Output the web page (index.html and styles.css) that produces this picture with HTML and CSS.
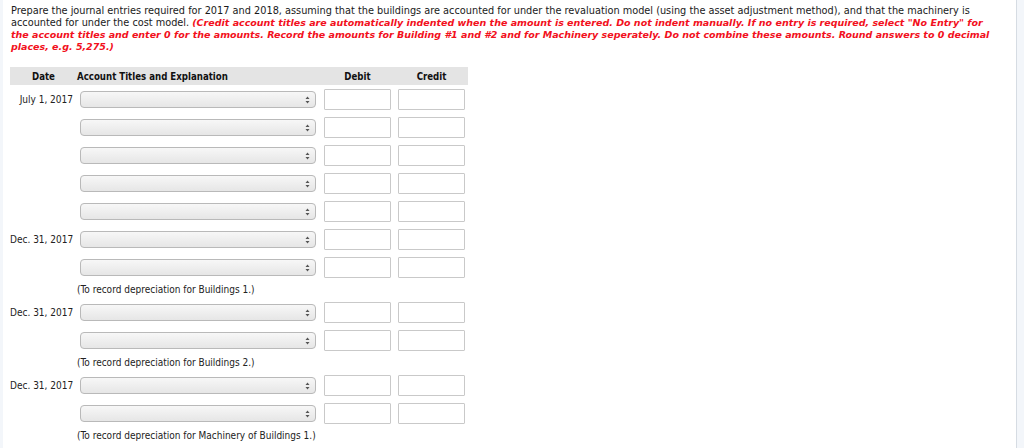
FILE: index.html
```html
<!DOCTYPE html>
<html>
<head>
<meta charset="utf-8">
<link rel="stylesheet" href="styles.css">
</head>
<body>
<div class="page">
  <p class="intro">Prepare the journal entries required for 2017 and 2018, assuming that the buildings are accounted for under the revaluation model (using the asset adjustment method), and that the machinery is accounted for under the cost model. <em class="warn">(Credit account titles are automatically indented when the amount is entered. Do not indent manually. If no entry is required, select "No Entry" for the account titles and enter 0 for the amounts. Record the amounts for Building #1 and #2 and for Machinery seperately. Do not combine these amounts. Round answers to 0 decimal places, e.g. 5,275.)</em></p>

  <table class="journal">
    <colgroup>
      <col class="c-date"><col class="c-acct"><col class="c-debit"><col class="c-credit">
    </colgroup>
    <thead>
      <tr><th>Date</th><th class="th-acct">Account Titles and Explanation</th><th>Debit</th><th>Credit</th></tr>
    </thead>
    <tbody>
      <tr><td class="date">July 1, 2017</td><td><span class="sel"><svg width="5" height="8" viewBox="0 0 5 8"><path d="M2.5 0.5 L4.5 3 L0.5 3 Z M2.5 7.5 L4.5 5 L0.5 5 Z" fill="#555"/></svg></span></td><td><span class="amt"></span></td><td><span class="amt"></span></td></tr>
      <tr><td class="date"></td><td><span class="sel"><svg width="5" height="8" viewBox="0 0 5 8"><path d="M2.5 0.5 L4.5 3 L0.5 3 Z M2.5 7.5 L4.5 5 L0.5 5 Z" fill="#555"/></svg></span></td><td><span class="amt"></span></td><td><span class="amt"></span></td></tr>
      <tr><td class="date"></td><td><span class="sel"><svg width="5" height="8" viewBox="0 0 5 8"><path d="M2.5 0.5 L4.5 3 L0.5 3 Z M2.5 7.5 L4.5 5 L0.5 5 Z" fill="#555"/></svg></span></td><td><span class="amt"></span></td><td><span class="amt"></span></td></tr>
      <tr><td class="date"></td><td><span class="sel"><svg width="5" height="8" viewBox="0 0 5 8"><path d="M2.5 0.5 L4.5 3 L0.5 3 Z M2.5 7.5 L4.5 5 L0.5 5 Z" fill="#555"/></svg></span></td><td><span class="amt"></span></td><td><span class="amt"></span></td></tr>
      <tr><td class="date"></td><td><span class="sel"><svg width="5" height="8" viewBox="0 0 5 8"><path d="M2.5 0.5 L4.5 3 L0.5 3 Z M2.5 7.5 L4.5 5 L0.5 5 Z" fill="#555"/></svg></span></td><td><span class="amt"></span></td><td><span class="amt"></span></td></tr>

      <tr><td class="date">Dec. 31, 2017</td><td><span class="sel"><svg width="5" height="8" viewBox="0 0 5 8"><path d="M2.5 0.5 L4.5 3 L0.5 3 Z M2.5 7.5 L4.5 5 L0.5 5 Z" fill="#555"/></svg></span></td><td><span class="amt"></span></td><td><span class="amt"></span></td></tr>
      <tr><td class="date"></td><td><span class="sel"><svg width="5" height="8" viewBox="0 0 5 8"><path d="M2.5 0.5 L4.5 3 L0.5 3 Z M2.5 7.5 L4.5 5 L0.5 5 Z" fill="#555"/></svg></span></td><td><span class="amt"></span></td><td><span class="amt"></span></td></tr>
      <tr class="note"><td></td><td colspan="3">(To record depreciation for Buildings 1.)</td></tr>

      <tr><td class="date">Dec. 31, 2017</td><td><span class="sel"><svg width="5" height="8" viewBox="0 0 5 8"><path d="M2.5 0.5 L4.5 3 L0.5 3 Z M2.5 7.5 L4.5 5 L0.5 5 Z" fill="#555"/></svg></span></td><td><span class="amt"></span></td><td><span class="amt"></span></td></tr>
      <tr><td class="date"></td><td><span class="sel"><svg width="5" height="8" viewBox="0 0 5 8"><path d="M2.5 0.5 L4.5 3 L0.5 3 Z M2.5 7.5 L4.5 5 L0.5 5 Z" fill="#555"/></svg></span></td><td><span class="amt"></span></td><td><span class="amt"></span></td></tr>
      <tr class="note"><td></td><td colspan="3">(To record depreciation for Buildings 2.)</td></tr>

      <tr><td class="date">Dec. 31, 2017</td><td><span class="sel"><svg width="5" height="8" viewBox="0 0 5 8"><path d="M2.5 0.5 L4.5 3 L0.5 3 Z M2.5 7.5 L4.5 5 L0.5 5 Z" fill="#555"/></svg></span></td><td><span class="amt"></span></td><td><span class="amt"></span></td></tr>
      <tr><td class="date"></td><td><span class="sel"><svg width="5" height="8" viewBox="0 0 5 8"><path d="M2.5 0.5 L4.5 3 L0.5 3 Z M2.5 7.5 L4.5 5 L0.5 5 Z" fill="#555"/></svg></span></td><td><span class="amt"></span></td><td><span class="amt"></span></td></tr>
      <tr class="note"><td></td><td colspan="3">(To record depreciation for Machinery of Buildings 1.)</td></tr>
    </tbody>
  </table>
</div>
</body>
</html>
```

FILE: styles.css
```css
html, body {
  margin: 0;
  padding: 0;
}
body {
  background: #f3f6fa;
  height: 448px;
  overflow: hidden;
}
.page {
  margin-left: 3px;
  width: 1014px;
  min-height: 448px;
  background: #ffffff;
  border-right: 1px solid #d6dce3;
  padding: 5px 0 0 7px;
  box-sizing: border-box;
  font-family: "DejaVu Sans", Verdana, sans-serif;
  color: #1a1a1a;
}
.intro {
  margin: 0 0 14px 1px;
  font-size: 9.75px;
  line-height: 12px;
  width: 982px;
}
.warn {
  color: #f21020;
  font-weight: bold;
  font-style: italic;
  font-size: 9.5px;
  line-height: 12px;
}
.journal {
  border-collapse: collapse;
  table-layout: fixed;
  width: 458px;
  font-family: "DejaVu Sans Condensed", Tahoma, sans-serif;
  font-size: 10px;
  color: #222;
}
.c-date { width: 67px; }
.c-acct { width: 243px; }
.c-debit { width: 75px; }
.c-credit { width: 73px; }
.journal th {
  background: #e4e4e4;
  height: 18px;
  padding: 0;
  font-family: "DejaVu Sans Condensed", Verdana, sans-serif;
  font-size: 9.6px;
  font-weight: bold;
  text-align: center;
  color: #111;
}
.journal th.th-acct { text-align: left; }
.journal td {
  padding: 4px 0 3px 0;
  height: 21px;
  vertical-align: middle;
}
.journal td.date {
  text-align: right;
  padding-right: 4px;
  white-space: nowrap;
}
.sel {
  display: flex;
  align-items: center;
  justify-content: flex-end;
  box-sizing: border-box;
  width: 236px;
  height: 17px;
  margin-left: 3px;
  padding-right: 5px;
  border: 1px solid #b9b9b9;
  border-radius: 4px;
  background: linear-gradient(#f7f7f7, #e6e6e6);
}
.amt {
  display: block;
  box-sizing: border-box;
  width: 67px;
  height: 21px;
  margin-left: 4px;
  border: 1px solid #c9c9c9;
  border-radius: 1px;
  background: #fff;
}
.journal td:nth-child(4) .amt { margin-left: 3px; }
.journal tr.note td {
  height: 17px;
  padding: 0;
  text-align: left;
  vertical-align: middle;
}
```
